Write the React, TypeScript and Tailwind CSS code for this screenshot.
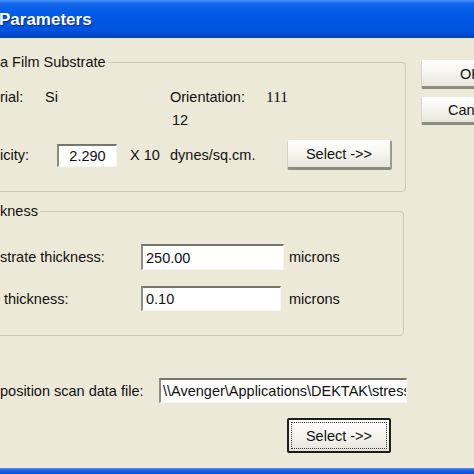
import type { ReactNode } from "react";

type BoxProps = {
  className?: string;
  children?: ReactNode;
};

function Group({ label, className = "", children }: BoxProps & { label: string }) {
  return (
    <div
      className={`relative ml-[-10px] shrink-0 rounded-[4px] border border-[#cbcab8] pl-[9px] ${className}`}
    >
      <span className="absolute -top-[10px] left-[7px] bg-[#ece9d8] px-[2px] leading-[18px]">
        {label}
      </span>
      {children}
    </div>
  );
}

function Field({ className = "", children }: BoxProps) {
  return (
    <div
      className={`flex shrink-0 items-center overflow-hidden whitespace-nowrap border-b border-l-2 border-r border-t-2 border-b-[#f7f6f0] border-l-[#8c8c82] border-r-[#f7f6f0] border-t-[#76766c] bg-white ${className}`}
    >
      {children}
    </div>
  );
}

function Button({ className = "", children }: BoxProps) {
  return (
    <div
      className={`flex shrink-0 items-center justify-center rounded-[2px] border border-b-[3px] border-r-2 border-[#d6d4c6] border-b-[#8a8d80] border-r-[#9a9c90] border-t-white bg-[linear-gradient(180deg,#ffffff_0%,#f6f5f0_45%,#e8e6da_100%)] ${className}`}
    >
      {children}
    </div>
  );
}

export default function App() {
  return (
    <div className="flex h-[474px] w-[474px] flex-col overflow-hidden bg-[#ece9d8] font-['Liberation_Sans',Arial,sans-serif] text-[14.5px] leading-[18px] text-[#111]">
      {/* title bar */}
      <div className="flex h-[38px] shrink-0 items-center bg-[linear-gradient(180deg,#4a95fb_0%,#1065ea_10%,#0058e4_45%,#0052db_85%,#0040b5_100%)]">
        <span className="ml-[-1px] mt-[2px] text-[17px] font-bold text-white [text-shadow:1px_1px_0_#0a2a80]">
          Parameters
        </span>
      </div>

      <div className="flex flex-1">
        <div className="flex w-[421px] shrink-0 flex-col">
          <Group label="a Film Substrate" className="mt-[24px] h-[130px] w-[416px]">
            <div className="mt-[25px] flex h-[18px] items-center">
              <span className="w-[45px]">rial:</span>
              <span className="w-[125px]">Si</span>
              <span className="w-[96px]">Orientation:</span>
              <span className="font-['Liberation_Serif',serif] text-[15.5px]">111</span>
            </div>
            <div className="mt-[5px] h-[18px] pl-[172px]">12</div>
            <div className="mt-[11px] flex h-[30px] items-center">
              <span className="w-[57px]">icity:</span>
              <Field className="h-[23px] w-[60px] justify-center">2.290</Field>
              <span className="ml-[13px] w-[40px]">X 10</span>
              <span className="w-[117px]">dynes/sq.cm.</span>
              <Button className="h-[30px] w-[105px]">Select -&gt;&gt;</Button>
            </div>
          </Group>

          <Group label="kness" className="mt-[19px] h-[125px] w-[414px]">
            <div className="mt-[32px] flex h-[26px] items-center">
              <span className="w-[141px]">strate thickness:</span>
              <Field className="h-[26px] w-[143px] pl-[3px]">250.00</Field>
              <span className="ml-[5px]">microns</span>
            </div>
            <div className="mt-[16px] flex h-[25px] items-center">
              <span className="w-[141px]">&nbsp;thickness:</span>
              <Field className="h-[25px] w-[140px] pl-[3px]">0.10</Field>
              <span className="ml-[8px]">microns</span>
            </div>
          </Group>

          <div className="mt-[42px] flex h-[25px] items-center">
            <span className="w-[159px] whitespace-nowrap">position scan data file:</span>
            <Field className="h-[25px] w-[248px] pl-[2px]">
              \\Avenger\Applications\DEKTAK\stress.txt
            </Field>
          </div>

          <div className="ml-[287px] mt-[15px] flex h-[35px] w-[104px] shrink-0 rounded-[2px] border-2 border-[#1d1d1b] bg-[linear-gradient(180deg,#ffffff_0%,#f4f3ee_50%,#e6e4d8_100%)] p-[2px]">
            <div className="flex flex-1 items-center justify-center border border-dotted border-[#3a3a3a]">
              Select -&gt;&gt;
            </div>
          </div>
        </div>

        <div className="flex flex-col gap-[8px] pt-[22px]">
          <Button className="h-[29px] w-[100px]">OK</Button>
          <Button className="h-[28px] w-[100px]">Cancel</Button>
        </div>
      </div>

      {/* window frame bottom */}
      <div className="h-[6px] shrink-0 bg-[linear-gradient(180deg,#5a9af5_0%,#1a62e6_35%,#0a4fd6_100%)]" />
    </div>
  );
}
